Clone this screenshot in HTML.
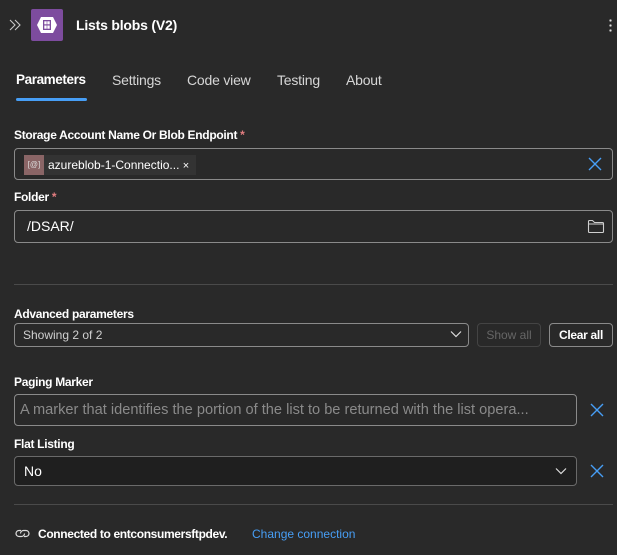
<!DOCTYPE html>
<html><head><style>
body{margin:0;width:617px;height:555px;background:#292929;font-family:"Liberation Sans",sans-serif;color:#fff;position:relative;overflow:hidden}
.a{position:absolute}
.lbl{font-size:12px;font-weight:bold;color:#fff;letter-spacing:-0.3px}
.lbl i{color:#e37d80;font-style:normal}
.box{position:absolute;border:1px solid #8a8a8a;border-radius:4px;box-sizing:border-box}
.tab{position:absolute;top:72px;font-size:14px;color:#d6d6d6;letter-spacing:-0.2px}
</style></head><body>
<svg class="a" style="left:8px;top:18px" width="14" height="14" viewBox="0 0 14 14"><path d="M2 2l5 5-5 5M7 2l5 5-5 5" stroke="#c8c8c8" fill="none" stroke-width="1.1"/></svg>
<div class="a" style="left:31px;top:9px;width:32px;height:32px;background:#7d4c9e;border-radius:2px"></div>
<svg class="a" style="left:31px;top:9px" width="32" height="32" viewBox="0 0 32 32"><path d="M10 8h12l4 8-4 8H10l-4-8z" fill="#fff"/><rect x="12" y="11" width="8" height="10" fill="#7d4c9e"/><rect x="13.3" y="12.3" width="2.4" height="3" fill="#fff"/><rect x="16.3" y="12.3" width="2.4" height="3" fill="#fff"/><rect x="13.3" y="16.5" width="2.4" height="3.2" fill="#fff"/><rect x="16.3" y="16.5" width="2.4" height="3.2" fill="#fff"/></svg>
<div class="a" style="left:76px;top:17px;font-size:14px;font-weight:bold;letter-spacing:-0.2px">Lists blobs (V2)</div>
<div class="a" style="left:609px;top:18px;width:3px;height:14px;background:radial-gradient(circle,#ddd 1px,transparent 1.3px) 0 0/3px 5px"></div>
<div class="tab" style="left:16px;color:#fff;font-weight:bold;font-size:13.5px;letter-spacing:-0.4px">Parameters</div>
<div class="tab" style="left:112px">Settings</div>
<div class="tab" style="left:187px">Code view</div>
<div class="tab" style="left:277px">Testing</div>
<div class="tab" style="left:346px">About</div>
<div class="a" style="left:16px;top:98px;width:71px;height:3px;background:#479ef5;border-radius:2px"></div>

<div class="a lbl" style="left:14px;top:128px">Storage Account Name Or Blob Endpoint <i>*</i></div>
<div class="box" style="left:14px;top:148px;width:599px;height:32px"></div>
<div class="a" style="left:24px;top:155px;width:172px;height:20px;background:#333"></div>
<div class="a" style="left:24px;top:155px;width:20px;height:20px;background:#8a6566;font-size:8px;color:#ddd;text-align:center;line-height:20px">[@]</div>
<div class="a" style="left:48px;top:158px;font-size:12px;color:#fff">azureblob-1-Connectio... <span style="font-size:11px">×</span></div>
<svg class="a" style="left:588px;top:157px" width="14" height="14"><path d="M1 1l12 12M13 1L1 13" stroke="#479ef5" stroke-width="1.4"/></svg>

<div class="a lbl" style="left:14px;top:190px">Folder <i>*</i></div>
<div class="box" style="left:14px;top:210px;width:599px;height:33px"></div>
<div class="a" style="left:27px;top:218px;font-size:14px">/DSAR/</div>
<svg class="a" style="left:587px;top:218px" width="18" height="16" viewBox="0 0 18 16"><path d="M1.5 3.5v10a1 1 0 001 1h13a1 1 0 001-1v-8a1 1 0 00-1-1h-8l-2-2h-3a1 1 0 00-1 1zM1.5 6h15" stroke="#cfcfcf" fill="none" stroke-width="1.1"/></svg>

<div class="a" style="left:14px;top:284px;width:599px;height:1px;background:#4a4a4a"></div>
<div class="a lbl" style="left:14px;top:307px">Advanced parameters</div>
<div class="box" style="left:14px;top:323px;width:455px;height:24px;border-color:#8a8a8a"></div>
<div class="a" style="left:23px;top:328px;font-size:12px;color:#d0d0d0">Showing 2 of 2</div>
<svg class="a" style="left:450px;top:330px" width="12" height="8"><path d="M1 1.5l5 5 5-5" stroke="#ddd" fill="none" stroke-width="1.2"/></svg>
<div class="box" style="left:477px;top:323px;width:64px;height:24px;border-color:#444;color:#666;font-size:12px;text-align:center;line-height:22px">Show all</div>
<div class="box" style="left:549px;top:323px;width:64px;height:24px;border-color:#8a8a8a;font-size:12px;font-weight:bold;text-align:center;line-height:22px;letter-spacing:-0.3px">Clear all</div>

<div class="a lbl" style="left:14px;top:375px">Paging Marker</div>
<div class="box" style="left:14px;top:394px;width:563px;height:32px"></div>
<div class="a" style="left:20px;top:402px;font-size:14.6px;color:#8a8a8a;white-space:nowrap">A marker that identifies the portion of the list to be returned with the list opera...</div>
<svg class="a" style="left:590px;top:403px" width="14" height="14"><path d="M1 1l12 12M13 1L1 13" stroke="#479ef5" stroke-width="1.4"/></svg>

<div class="a lbl" style="left:14px;top:437px">Flat Listing</div>
<div class="box" style="left:14px;top:456px;width:563px;height:30px;background:#1f1f1f;border-color:#6a6a6a"></div>
<div class="a" style="left:24px;top:463px;font-size:14px">No</div>
<svg class="a" style="left:555px;top:467px" width="12" height="8"><path d="M1 1.5l5 5 5-5" stroke="#ddd" fill="none" stroke-width="1.2"/></svg>
<svg class="a" style="left:590px;top:464px" width="14" height="14"><path d="M1 1l12 12M13 1L1 13" stroke="#479ef5" stroke-width="1.4"/></svg>

<div class="a" style="left:14px;top:504px;width:599px;height:1px;background:#4a4a4a"></div>
<svg class="a" style="left:15px;top:527px" width="15" height="13" viewBox="0 0 15 13"><path d="M6 3.5H4a3 3 0 000 6h2.5a3 3 0 003-3M9 9.5h2a3 3 0 000-6H8.5a3 3 0 00-3 3" stroke="#ddd" fill="none" stroke-width="1.2"/></svg>
<div class="a" style="left:38px;top:527px;font-size:12px;font-weight:bold;letter-spacing:-0.35px">Connected to entconsumersftpdev.</div>
<div class="a" style="left:252px;top:527px;font-size:12px;color:#479ef5">Change connection</div>
</body></html>
